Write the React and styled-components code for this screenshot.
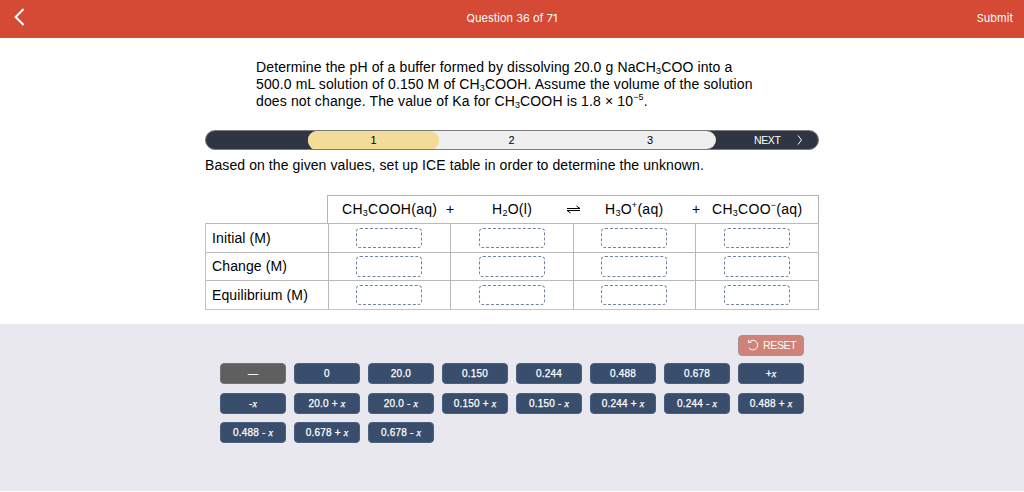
import React from "react";
import styled, { createGlobalStyle } from "styled-components";

const GlobalStyle = createGlobalStyle`
  * {
    box-sizing: border-box;
  }

  body {
    margin: 0;
    background: #fff;
    color: #000;
    font-family: "Liberation Sans", Arial, sans-serif;
  }

  sub,
  sup {
    font-size: 9px;
    line-height: 0;
  }

  sub {
    vertical-align: -1.5px;
  }

  button {
    font-family: inherit;
    padding: 0;
  }
`;

const Page = styled.div`
  height: 492px;
  display: flex;
  flex-direction: column;
  overflow: hidden;
`;

const TopBar = styled.header`
  height: 38px;
  flex: none;
  display: grid;
  grid-template-columns: 1fr auto 1fr;
  align-items: center;
  padding: 0 11px 2px;
  background: #d44a34;
  color: #fff;
  font-family: Inter, sans-serif;
  font-size: 11px;
`;

const BackIcon = styled.svg`
  width: 11px;
  height: 18px;
  display: block;
  margin: -2px 0 0 3px;
`;

const Counter = styled.span`
  letter-spacing: 0;
`;

const Submit = styled.span`
  text-align: right;
`;

const Question = styled.main`
  width: 614px;
  height: 286px;
  flex: none;
  margin-left: 205px;
  padding-top: 21px;
`;

const Prompt = styled.p`
  margin: 0 0 20px 51px;
  font-size: 14px;
  line-height: 17px;
  white-space: nowrap;
`;

const Line = styled.span`
  display: block;
  letter-spacing: ${({ $spacing }) => $spacing}px;
`;

const Steps = styled.nav`
  height: 20px;
  display: flex;
  border: 1px solid #7b7c80;
  border-radius: 10px;
  background: #2f3542;
  overflow: hidden;
  font-size: 11px;
  line-height: 19px;
  text-align: center;
`;

const StepTrack = styled.div`
  width: 408px;
  margin-left: 102px;
  display: grid;
  grid-template-columns: 131px 145px 132px;
  border-radius: 9px;
  background: #efefef;
`;

const Step = styled.span`
  border-radius: 9px;
  background: ${({ $active }) => ($active ? "#f2dc97" : "transparent")};
`;

const Next = styled.div`
  flex: 1;
  display: flex;
  align-items: center;
  gap: 17px;
  padding-left: 38px;
  color: #fff;
  font-size: 10.5px;
  letter-spacing: -0.4px;
`;

const Instruction = styled.p`
  margin: 7px 0 21px;
  font-size: 14px;
  line-height: 17px;
  letter-spacing: 0.09px;
  white-space: nowrap;
`;

const Equation = styled.div`
  height: 28px;
  margin-left: 122px;
  display: flex;
  align-items: center;
  padding: 0 0 1px 14px;
  border: 1px solid #b4b4b4;
  border-bottom: 0;
  font-size: 14px;
  line-height: 17px;
  white-space: nowrap;
`;

const Term = styled.span`
  flex: none;
  width: ${({ $width }) => $width}px;
  letter-spacing: 0.28px;
`;

const Table = styled.div`
  display: grid;
  grid-template-columns: 123px 122px 123px 122px 123px;
  grid-template-rows: 29px 28px 30px;
  border-left: 1px solid #c2c2c2;
`;

const Cell = styled.div`
  display: flex;
  align-items: center;
  justify-content: ${({ $label }) => ($label ? "flex-start" : "center")};
  padding: ${({ $label }) => ($label ? "0 0 1px 6px" : "0 1px 0 0")};
  border-top: 1px solid #b9b9b9;
  border-right: 1px solid #b9b9b9;
  border-bottom: ${({ $last }) => ($last ? "1px solid #c2c2c2" : "0")};
  font-size: 14px;
  letter-spacing: 0.12px;
`;

const DropZone = styled.div`
  width: 66px;
  height: ${({ $tall }) => ($tall ? 21 : 20)}px;
  border: 1px dashed #7182a0;
  border-radius: 4px;
`;

const Tray = styled.section`
  height: 167px;
  flex: none;
  padding: 11px 0 0 220px;
  background: #e9e8ee;
`;

const TileGrid = styled.div`
  display: grid;
  grid-template-columns: repeat(8, 66px);
  grid-auto-rows: 21px;
  gap: 8.3px 8px;
`;

const Tile = styled.button`
  border: 1px solid ${({ $muted }) => ($muted ? "#747474" : "#4b6080")};
  border-radius: 4px;
  background: ${({ $muted }) => ($muted ? "#5f5f5f" : "#394e6d")};
  color: #fff;
  font-size: 10px;
  line-height: 19px;
  letter-spacing: 0.2px;
  white-space: pre;
  -webkit-text-stroke: 0.25px #fff;
`;

const Variable = styled.i`
  font-family: "Liberation Serif", "Times New Roman", serif;
`;

const Reset = styled.button`
  width: 66px;
  height: 21px;
  margin: 0 0 7.4px 518px;
  display: flex;
  align-items: center;
  gap: 4px;
  padding: 0 0 1px 8px;
  border: 1px solid #a09492;
  border-radius: 4px;
  background: #cf8277;
  color: #fff;
  font-size: 10.5px;
  letter-spacing: -0.35px;
`;

const rows = ["Initial (M)", "Change (M)", "Equilibrium (M)"];
const columns = [0, 1, 2, 3];

const tiles = [
  "—", "0", "20.0", "0.150", "0.244", "0.488", "0.678", "+x",
  "-x", "20.0 + x", "20.0 - x", "0.150 + x", "0.150 - x", "0.244 + x", "0.244 - x", "0.488 + x",
  "0.488 - x", "0.678 + x", "0.678 - x",
];

const TileLabel = ({ text }) =>
  text.endsWith("x") ? (
    <>
      {text.slice(0, -1)}
      <Variable>x</Variable>
    </>
  ) : (
    text
  );

const App = () => (
  <Page>
    <GlobalStyle />
    <TopBar>
      <BackIcon viewBox="0 0 11 18" fill="none" stroke="#fff" strokeWidth="2">
        <path d="M9.6 1 1.6 9 9.6 17" />
      </BackIcon>
      <Counter>Question 36 of 71</Counter>
      <Submit>Submit</Submit>
    </TopBar>

    <Question>
      <Prompt>
        <Line $spacing={0.12}>
          Determine the pH of a buffer formed by dissolving 20.0 g NaCH<sub>3</sub>COO into a
        </Line>
        <Line $spacing={0.12}>
          500.0 mL solution of 0.150 M of CH<sub>3</sub>COOH. Assume the volume of the solution
        </Line>
        <Line $spacing={0.14}>
          does not change. The value of Ka for CH<sub>3</sub>COOH is 1.8 × 10<sup>−5</sup>.
        </Line>
      </Prompt>

      <Steps>
        <StepTrack>
          <Step $active>1</Step>
          <Step>2</Step>
          <Step>3</Step>
        </StepTrack>
        <Next>
          NEXT
          <svg width="6" height="10" viewBox="0 0 6 10" fill="none" stroke="#fff">
            <path d="M1 .5 4.5 5 1 9.5" />
          </svg>
        </Next>
      </Steps>

      <Instruction>Based on the given values, set up ICE table in order to determine the unknown.</Instruction>

      {/* reaction header over the value columns */}
      <Equation>
        <Term $width={104}>CH<sub>3</sub>COOH(aq)</Term>
        <Term $width={46}>+</Term>
        <Term $width={74}>H<sub>2</sub>O(l)</Term>
        <Term $width={39}>
          <svg width="15" height="9" viewBox="0 0 15 9" fill="none" stroke="#000">
            <path d="M1 3.5H14L10.5 1M14 5.5H1L4.5 8" />
          </svg>
        </Term>
        <Term $width={87}>H<sub>3</sub>O<sup>+</sup>(aq)</Term>
        <Term $width={20}>+</Term>
        <Term $width={95}>CH<sub>3</sub>COO<sup>−</sup>(aq)</Term>
      </Equation>
      <Table>
        {rows.map((row, index) => (
          <React.Fragment key={row}>
            <Cell $label $last={index === 2}>{row}</Cell>
            {columns.map((column) => (
              <Cell key={column} $last={index === 2}>
                <DropZone $tall={index === 1} />
              </Cell>
            ))}
          </React.Fragment>
        ))}
      </Table>
    </Question>

    <Tray>
      <Reset>
        <svg width="12" height="12" viewBox="0 0 12 12" fill="none" stroke="#fff">
          <path d="M1.8 3.6A4.8 4.8 0 1 1 1.9 8.8M1.3 .9 1.7 3.7 4.6 3.3" />
        </svg>
        RESET
      </Reset>
      <TileGrid>
        {tiles.map((tile) => (
          <Tile key={tile} $muted={tile === "—"}>
            <TileLabel text={tile} />
          </Tile>
        ))}
      </TileGrid>
    </Tray>
  </Page>
);

export default App;
